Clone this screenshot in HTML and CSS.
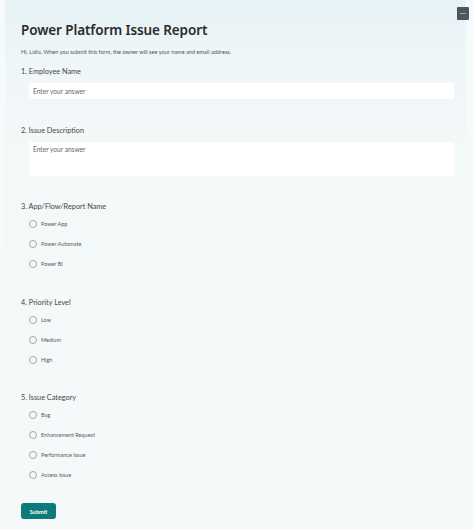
FILE: index.html
```html
<!DOCTYPE html>
<html>
<head>
<meta charset="utf-8">
<link rel="stylesheet" href="styles.css">
</head>
<body>
<div class="page">
  <div class="card">
    <h1 class="title">Power Platform Issue Report</h1>
    <p class="intro">Hi, Lidia. When you submit this form, the owner will see your name and email address.</p>

    <div class="q q1">
      <div class="qlabel">1. Employee Name</div>
      <div class="input">Enter your answer</div>
    </div>

    <div class="q q2">
      <div class="qlabel">2. Issue Description</div>
      <div class="input area">Enter your answer</div>
    </div>

    <div class="q q3">
      <div class="qlabel">3. App/Flow/Report Name</div>
      <div class="opts">
        <div class="opt"><span class="radio"></span>Power App</div>
        <div class="opt"><span class="radio"></span>Power Automate</div>
        <div class="opt"><span class="radio"></span>Power BI</div>
      </div>
    </div>

    <div class="q q4">
      <div class="qlabel">4. Priority Level</div>
      <div class="opts">
        <div class="opt"><span class="radio"></span>Low</div>
        <div class="opt"><span class="radio"></span>Medium</div>
        <div class="opt"><span class="radio"></span>High</div>
      </div>
    </div>

    <div class="q q5">
      <div class="qlabel">5. Issue Category</div>
      <div class="opts">
        <div class="opt"><span class="radio"></span>Bug</div>
        <div class="opt"><span class="radio"></span>Enhancement Request</div>
        <div class="opt"><span class="radio"></span>Performance Issue</div>
        <div class="opt"><span class="radio"></span>Access Issue</div>
      </div>
    </div>

    <button class="submit">Submit</button>
  </div>
  <div class="corner"><span></span></div>
</div>
</body>
</html>
```
FILE: styles.css
```css
* { box-sizing: border-box; }
html, body { margin: 0; padding: 0; }
body {
  width: 474px;
  height: 529px;
  overflow: hidden;
  background: #f7fafa;
  font-family: "Lato", "Open Sans", sans-serif;
  color: #323130;
}
.page {
  position: relative;
  width: 474px;
  height: 529px;
  padding: 0 8px 3px 5px;
}
.card {
  height: 526px;
  background: linear-gradient(180deg, #e6f2f5 0px, #eff6f8 60px, #f3f8f9 140px, #f4f9f9 100%);
  padding: 21px 0 0 16px;
}
.title {
  margin: 0;
  font-family: "Noto Sans", "Open Sans", sans-serif;
  font-size: 13.5px;
  font-weight: 600;
  line-height: 18px;
  color: #2b2b2b;
  letter-spacing: -0.1px;
}
.intro {
  margin: 9px 0 0 0;
  font-size: 5.6px;
  line-height: 8px;
  color: #555555;
}
.qlabel {
  font-size: 7.3px;
  line-height: 10px;
  color: #484644;
}
.q1 { margin-top: 11px; }
.q2 { margin-top: 27px; }
.q3 { margin-top: 26px; }
.q4 { margin-top: 29px; }
.q5 { margin-top: 28px; }
.input {
  margin: 6px 0 0 8px;
  width: 425px;
  height: 16px;
  background: #ffffff;
  font-size: 6.6px;
  line-height: 16px;
  padding-left: 4px;
  color: #666666;
}
.input.area {
  height: 34px;
  line-height: 14px;
}
.opts {
  margin: 7px 0 0 8px;
  display: flex;
  flex-direction: column;
  gap: 10px;
}
.opt {
  display: flex;
  align-items: center;
  height: 10px;
  font-size: 5.5px;
  color: #5a5a5a;
}
.radio {
  width: 8px;
  height: 8px;
  border: 1px solid #a8a6a4;
  border-radius: 50%;
  margin-right: 4px;
  background: transparent;
}
.submit {
  margin-top: 23px;
  width: 35px;
  height: 16px;
  border: none;
  border-radius: 3px;
  background: #0f7a7a;
  color: #ffffff;
  font-family: "Lato", sans-serif;
  font-weight: 700;
  font-size: 5.6px;
  padding: 0;
}
.corner {
  position: absolute;
  top: 7px;
  left: 457px;
  width: 12px;
  height: 13px;
  background: #4b5760;
  border-radius: 1px;
  display: flex;
  align-items: center;
  justify-content: center;
}
.corner span {
  width: 6px;
  height: 1px;
  background: #9aa5ad;
}
```
